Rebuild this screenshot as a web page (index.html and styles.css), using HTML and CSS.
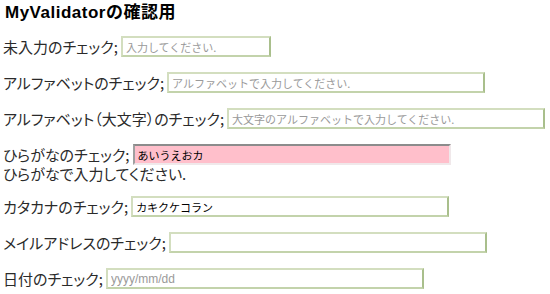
FILE: index.html
```html
<!DOCTYPE html>
<html lang="ja">
<head>
<meta charset="utf-8">
<title>MyValidatorの確認用</title>
<link rel="stylesheet" href="styles.css">
</head>
<body>
<h1 class="title">MyValidatorの確認用</h1>
<form class="form">
  <div class="row">
    <label class="label">未入力のチェック;</label>
    <input class="field short" type="text" placeholder="入力してください.">
  </div>
  <div class="row">
    <label class="label">アルファベットのチェック;</label>
    <input class="field" type="text" placeholder="アルファベットで入力してください.">
  </div>
  <div class="row">
    <label class="label">アルファベット（大文字）のチェック;</label>
    <input class="field" type="text" placeholder="大文字のアルファベットで入力してください.">
  </div>
  <div class="row has-error">
    <div class="line">
      <label class="label">ひらがなのチェック;</label>
      <input class="field error" type="text" value="あいうえおカ">
    </div>
    <div class="message">ひらがなで入力してください.</div>
  </div>
  <div class="row">
    <label class="label">カタカナのチェック;</label>
    <input class="field" type="text" value="カキクケコラン">
  </div>
  <div class="row">
    <label class="label">メイルアドレスのチェック;</label>
    <input class="field" type="text">
  </div>
  <div class="row">
    <label class="label">日付のチェック;</label>
    <input class="field date" type="text" placeholder="yyyy/mm/dd">
  </div>
</form>
</body>
</html>
```
FILE: styles.css
```css
html, body {
  margin: 0;
  padding: 0;
  background: #ffffff;
}
body {
  padding: 2px 3px 0 3px;
  font-family: "Noto Sans CJK JP", "Liberation Sans", sans-serif;
  font-size: 15px;
  color: #2a2a2a;
  font-feature-settings: "palt";
}
.title {
  margin: 0 0 0 2px;
  height: 23px;
  font-family: "Liberation Sans", "Noto Sans CJK JP", sans-serif;
  font-size: 17px;
  line-height: 22px;
  font-weight: bold;
  color: #000000;
  letter-spacing: 0.5px;
  font-feature-settings: normal;
}
.form {
  margin-top: 11px;
}
.row {
  display: flex;
  align-items: center;
  height: 21px;
  margin-bottom: 15px;
}
.row.has-error {
  display: block;
  height: auto;
  margin-bottom: 13px;
}
.line {
  display: flex;
  align-items: center;
  height: 21px;
}
.label {
  white-space: nowrap;
  font-size: 15px;
  line-height: 20px;
}
.field {
  box-sizing: border-box;
  width: 318px;
  height: 21px;
  margin-left: 3px;
  padding: 0 3px;
  border: 2px solid #d3debf;
  border-right-color: #a9bf8c;
  border-bottom-color: #c3d3ab;
  background: #ffffff;
  font-family: "Noto Sans CJK JP", "Liberation Sans", sans-serif;
  font-size: 11px;
  color: #000000;
  outline: none;
}
.field::placeholder {
  color: #9a9a9a;
}
.field.short {
  width: 150px;
}
.field.date {
  font-family: "Liberation Sans", Arial, sans-serif;
  font-size: 12px;
}
.field.error {
  background: #ffbfcb;
  border: 2px solid #f0e8ea;
  border-top-color: #8c8c8c;
  border-left-color: #a0a0a0;
}
.message {
  font-size: 15px;
  line-height: 18px;
}
```
